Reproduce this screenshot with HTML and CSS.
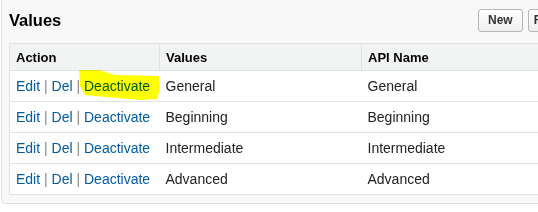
FILE: index.html
```html
<!DOCTYPE html>
<html lang="en">
<head>
  <meta charset="UTF-8">
  <title>Values</title>
  <link rel="stylesheet" href="styles.css">
</head>
<body>

  <div class="panel">
    <div class="panel-head">
      <h2>Values</h2>
      <div class="buttons">
        <button class="btn">New</button>
        <button class="btn">Reorder</button>
      </div>
    </div>

    <table class="list">
      <thead>
        <tr>
          <th class="col-action">Action</th>
          <th class="col-value">Values</th>
          <th>API Name</th>
        </tr>
      </thead>
      <tbody>
        <tr>
          <td class="actions"><a href="#">Edit</a> | <a href="#">Del</a> | <a href="#">Deactivate</a></td>
          <td>General</td>
          <td>General</td>
        </tr>
        <tr>
          <td class="actions"><a href="#">Edit</a> | <a href="#">Del</a> | <a href="#">Deactivate</a></td>
          <td>Beginning</td>
          <td>Beginning</td>
        </tr>
        <tr>
          <td class="actions"><a href="#">Edit</a> | <a href="#">Del</a> | <a href="#">Deactivate</a></td>
          <td>Intermediate</td>
          <td>Intermediate</td>
        </tr>
        <tr>
          <td class="actions"><a href="#">Edit</a> | <a href="#">Del</a> | <a href="#">Deactivate</a></td>
          <td>Advanced</td>
          <td>Advanced</td>
        </tr>
      </tbody>
    </table>

    <!-- highlighter mark drawn over the first Deactivate link -->
    <svg class="marker" width="538" height="212" viewBox="0 0 538 212">
      <polygon points="78,70 98,70 114,75 158,76 159,88 156,99 140,100 104,97 84,95 79,86" fill="#ffff00"/>
    </svg>
  </div>

</body>
</html>
```

FILE: styles.css
```css
body {
  margin: 0;
  background-color: #ffffff;
  font-family: Arial, "Liberation Sans", sans-serif;
  font-size: 14px;
  color: #222;
  overflow: hidden;
}

.panel {
  position: relative;
  width: 640px;
  margin: -4px 0 0 1px;
  padding: 0 0 8px 7px;
  background-color: #f8f8f8;
  border: 1px solid #e0e3e5;
  border-radius: 0 0 4px 4px;
}

.panel-head {
  display: flex;
  align-items: center;
  height: 46px;
}

.panel-head h2 {
  flex: 0 0 469px;
  margin: 0;
  font-size: 16.5px;
  font-weight: bold;
  color: #000;
}

.buttons {
  display: flex;
  gap: 5px;
}

.btn {
  font-family: Arial, "Liberation Sans", sans-serif;
  font-size: 12px;
  font-weight: bold;
  color: #333;
  padding: 0 9px;
  height: 23px;
  background: linear-gradient(#ffffff, #efefef);
  border: 1px solid #b5b5b5;
  border-radius: 3px;
}

.btn + .btn {
  padding: 0 5px;
}

.list {
  width: 600px;
  border-collapse: collapse;
  background-color: #ffffff;
  border: 1px solid #e0e3e5;
}

.list th {
  text-align: left;
  font-size: 13px;
  font-weight: bold;
  color: #000;
  background-color: #f2f3f3;
  height: 26px;
  padding: 0 6px;
  border-bottom: 1px solid #e0e3e5;
  border-right: 1px solid #e0e3e5;
}

.list .col-action {
  width: 137px;
}

.list .col-value {
  width: 189px;
}

.list td {
  height: 30px;
  padding: 0 6px;
  border-bottom: 1px solid #e3e3e3;
  vertical-align: middle;
}

.actions {
  color: #888;
}

.actions a {
  color: #015ba7;
  text-decoration: none;
}

.marker {
  position: absolute;
  left: -1px;
  top: 3px;
  pointer-events: none;
  mix-blend-mode: multiply;
}
```
